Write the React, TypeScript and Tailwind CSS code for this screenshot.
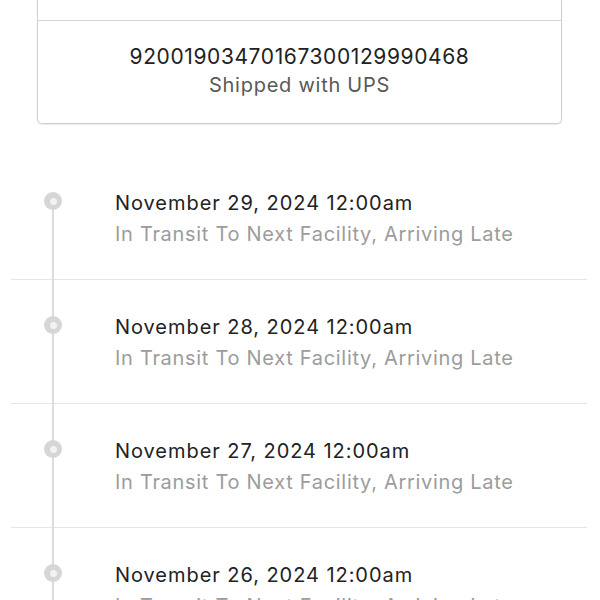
import React from 'react';

interface TrackingEvent {
  date: string;
  status: string;
}

const events: TrackingEvent[] = [
  { date: 'November 29, 2024 12:00am', status: 'In Transit To Next Facility, Arriving Late' },
  { date: 'November 28, 2024 12:00am', status: 'In Transit To Next Facility, Arriving Late' },
  { date: 'November 27, 2024 12:00am', status: 'In Transit To Next Facility, Arriving Late' },
  { date: 'November 26, 2024 12:00am', status: 'In Transit To Next Facility, Arriving Late' },
];

const TimelineRow = ({ event }: { event: TrackingEvent }) => (
  <div className="flex h-[124px] border-b border-[#e6e6e6]">
    <div className="relative w-[104px] shrink-0">
      <div className="absolute left-[33px] top-[36px] w-[18px] h-[18px] rounded-full bg-[#d6d6d6] flex items-center justify-center">
        <div className="w-[7px] h-[7px] rounded-full bg-[#f2f2f2]"></div>
      </div>
    </div>
    <div className="pt-[33px]">
      <p className="text-[20px] leading-[28px] tracking-[0.95px] text-[#222]">{event.date}</p>
      <p className="text-[20px] leading-[34px] tracking-[0.7px] text-[#9c9c9c]">{event.status}</p>
    </div>
  </div>
);

export default function App() {
  return (
    <div className="w-[600px] h-[600px] overflow-hidden bg-white" style={{ fontFamily: 'Inter, "Liberation Sans", sans-serif' }}>
      <div className="ml-[37px] w-[525px] border border-t-0 border-[#cfcfcf] rounded-b-[5px] shadow-[0_1px_1px_rgba(0,0,0,0.08)]">
        <div className="h-[21px] border-b border-[#d4d4d4]"></div>
        <div className="flex flex-col items-center pt-[22px] pb-[24px]">
          <p className="text-[21px] leading-[28px] tracking-[0.6px] text-[#222]">92001903470167300129990468</p>
          <p className="text-[20px] leading-[28px] tracking-[0.75px] text-[#595959]">Shipped with UPS</p>
        </div>
      </div>

      <div className="relative ml-[11px] w-[576px] mt-[32px]">
        <div className="absolute left-[41px] top-[45px] bottom-0 w-[2px] bg-[#dcdcdc]"></div>
        {events.map((event) => (
          <TimelineRow key={event.date} event={event} />
        ))}
      </div>
    </div>
  );
}
